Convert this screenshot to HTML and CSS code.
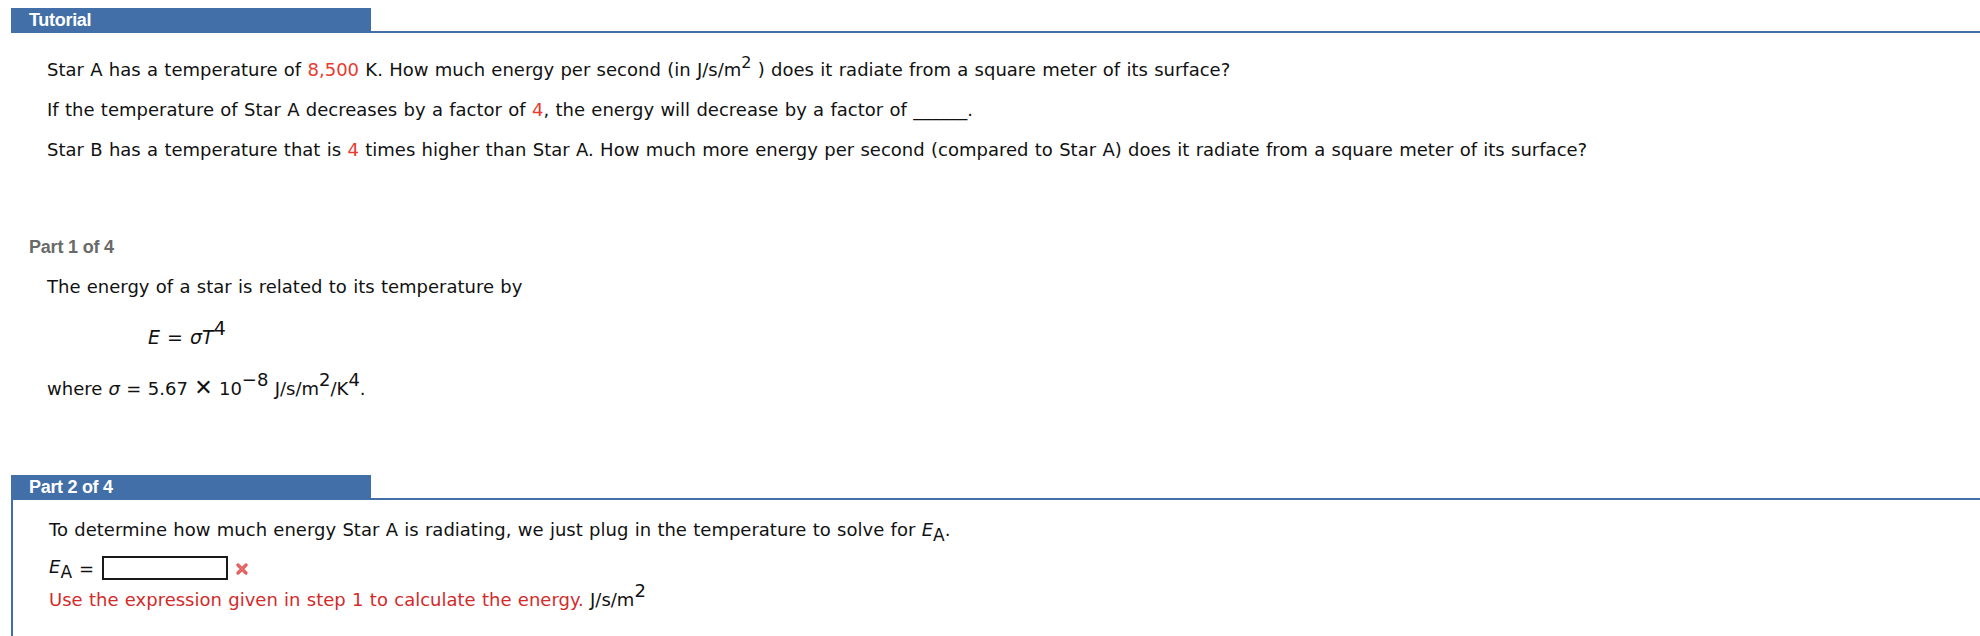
FILE: index.html
```html
<!DOCTYPE html>
<html lang="en">
<head>
<meta charset="utf-8">
<title>Tutorial</title>
<link rel="stylesheet" href="styles.css">
</head>
<body>
<div class="page">
  <section class="tutorial">
    <div class="tabbar"><div class="tab">Tutorial</div></div>
    <div class="tut-body">
      <p>Star A has a temperature of <span class="num">8,500</span> K. How much energy per second (in J/s/m<sup class="sq">2</sup> ) does it radiate from a square meter of its surface?</p>
      <p>If the temperature of Star A decreases by a factor of <span class="num">4</span>, the energy will decrease by a factor of ______.</p>
      <p>Star B has a temperature that is <span class="num">4</span> times higher than Star A. How much more energy per second (compared to Star A) does it radiate from a square meter of its surface?</p>
    </div>
  </section>

  <section class="part done">
    <div class="part-label">Part 1 of 4</div>
    <div class="part-body">
      <p>The energy of a star is related to its temperature by</p>
      <div class="formula"><i>E</i> = <i>σT</i><sup class="pow">4</sup></div>
      <p class="where">where <i>σ</i> = 5.67 <span class="times">✕</span> 10<sup class="exp">−8</sup> <span class="unit">J/s/m<sup>2</sup>/K<sup>4</sup></span>.</p>
    </div>
  </section>

  <section class="part active">
    <div class="tabbar"><div class="tab">Part 2 of 4</div></div>
    <div class="active-body">
      <p>To determine how much energy Star A is radiating, we just plug in the temperature to solve for <i>E</i><sub>A</sub>.</p>
      <div class="answer-row">
        <span class="var"><i>E</i><sub>A</sub></span>
        <span class="eq">=</span>
        <input class="answer" type="text" aria-label="E_A">
        <svg class="wrong" width="12" height="12" viewBox="0 0 12 12" aria-hidden="true">
          <path d="M2 2 L10 10 M10 2 L2 10" stroke="#e45a5a" stroke-width="3.2" stroke-linecap="round"/>
          <path d="M2.5 2.2 L9.5 9.2 M9.5 2.2 L2.5 9.2" stroke="#f08a8a" stroke-width="1" stroke-linecap="round" opacity="0.7"/>
        </svg>
      </div>
      <p class="feedback"><span class="msg">Use the expression given in step 1 to calculate the energy.</span> <span class="unit-black">J/s/m<sup>2</sup></span></p>
    </div>
  </section>
</div>
</body>
</html>
```

FILE: styles.css
```css
html, body {
  margin: 0;
  padding: 0;
  background: #ffffff;
}

body {
  font-family: "DejaVu Sans", Verdana, sans-serif;
  font-size: 18px;
  word-spacing: 0.6px;
  color: #111111;
}

.page {
  padding: 8px 0 0 11px;
}

p {
  margin: 0;
  line-height: 20px;
}

.tabbar {
  display: flex;
  border-bottom: 2px solid #426fa7;
}

.tab {
  width: 342px;
  height: 23px;
  padding-left: 18px;
  background: #426fa7;
  color: #ffffff;
  font-family: "Liberation Sans", Arial, sans-serif;
  font-weight: bold;
  font-size: 18px;
  line-height: 24px;
  letter-spacing: -0.3px;
  word-spacing: 0;
}

.tut-body {
  padding: 27px 0 0 36px;
  display: flex;
  flex-direction: column;
  gap: 20px;
}

.num {
  color: #e63b2e;
}

sup {
  line-height: 0;
  vertical-align: baseline;
  position: relative;
}

.sq {
  font-size: 16px;
  top: -8px;
}

/* Part 1 */
.part.done {
  margin-top: 77px;
}

.part-label {
  padding-left: 18px;
  font-family: "Liberation Sans", Arial, sans-serif;
  font-weight: bold;
  font-size: 18px;
  line-height: 20px;
  color: #6a6a6a;
  letter-spacing: -0.2px;
  word-spacing: 0;
}

.part-body {
  padding: 20px 0 0 36px;
}

.formula {
  margin: 30px 0 0 101px;
  font-size: 19px;
  line-height: 20px;
  word-spacing: 1px;
}

.pow {
  font-size: 19px;
  top: -9px;
  margin-left: 0;
}

.where {
  margin-top: 31px;
}

.times {
  font-weight: bold;
  font-size: 22px;
}

.exp {
  font-size: 18px;
  top: -9px;
}

.unit {
  font-size: 18px;
}

.unit sup {
  font-size: 18px;
  top: -9px;
}

/* Part 2 */
.part.active {
  margin-top: 76px;
}

.active-body {
  border-left: 2px solid #426fa7;
  padding: 20px 0 40px 36px;
}

sub {
  font-size: 17px;
  line-height: 0;
  vertical-align: baseline;
  position: relative;
  top: 5px;
  font-style: normal;
}

.answer-row {
  display: flex;
  align-items: center;
  height: 24px;
  margin-top: 16px;
}

.var {
  font-size: 18px;
  line-height: 20px;
  margin-top: -3px;
}

.eq {
  margin-left: 7px;
  font-size: 18px;
}

.answer {
  margin: 0 0 0 8px;
  width: 122px;
  height: 20px;
  padding: 0;
  border: 2px solid #1a1a1a;
  border-radius: 0;
  box-sizing: content-box;
  background: #ffffff;
  font-size: 15px;
}

.wrong {
  margin-left: 8px;
  margin-top: 2px;
}

.feedback {
  margin-top: 10px;
}

.msg {
  color: #d32a2a;
}

.unit-black {
  font-size: 18px;
}

.unit-black sup {
  font-size: 18px;
  top: -9px;
}
```
